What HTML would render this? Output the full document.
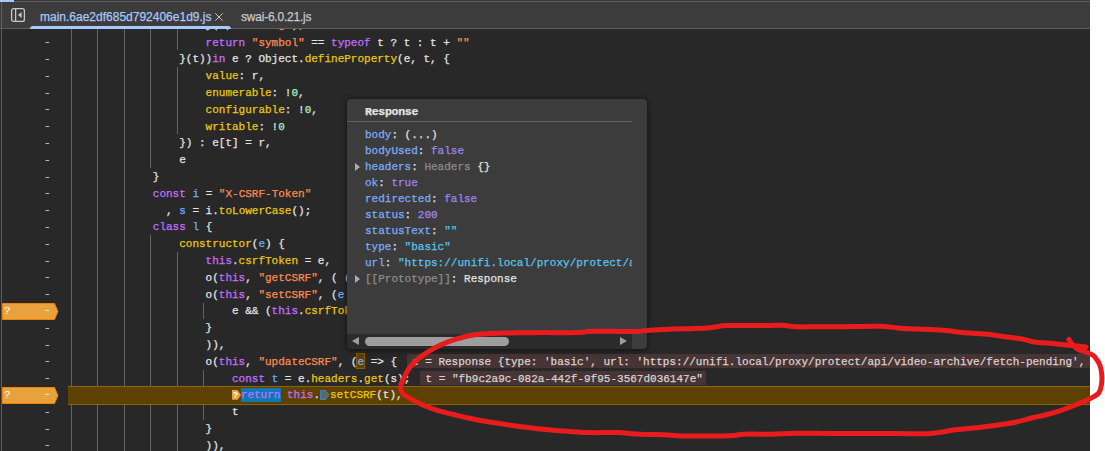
<!DOCTYPE html>
<html lang="en"><head><meta charset="utf-8"><title>Sources</title>
<style>
html,body{margin:0;padding:0;background:#fff;}
body{width:1105px;height:451px;overflow:hidden;position:relative;-webkit-text-stroke:0.25px;font-family:"Liberation Mono","DejaVu Sans Mono",monospace;}
#pane{position:absolute;left:0;top:0;width:1090px;height:451px;background:#282828;overflow:hidden;}
#tabbar{position:absolute;left:0;top:0;width:1090px;height:28px;background:#3c3c3c;z-index:5;}
#tabbar .topline{position:absolute;left:0;top:0;width:1090px;height:1px;background:#3a3a3a;}
#tabbar .topline2{position:absolute;left:0;top:1px;width:1090px;height:1px;background:#5e5e5e;}
#tabbar .bluestrip{position:absolute;left:0;top:0;width:14px;height:2px;background:#a8c7fa;}
#tabbar .botline{position:absolute;left:0;top:28px;width:1090px;height:1px;background:#5e5e5e;}
#tabbar .underline{position:absolute;left:30px;top:26px;width:201px;height:3px;background:#a8c7fa;border-radius:3px 3px 0 0;}
.tab{position:absolute;top:9px;height:16px;line-height:16px;font-family:"Liberation Sans","DejaVu Sans",sans-serif;font-size:12px;white-space:nowrap;}
#leftborder{position:absolute;left:1px;top:2px;width:1px;height:449px;background:#5e5e5e;z-index:6;}
.ln{position:absolute;left:0;height:17px;line-height:17px;font-size:11px;color:#e3e3e3;white-space:pre;}
.dash{position:absolute;left:44px;width:7px;height:17px;line-height:17px;font-size:11px;color:#a8c7fa;}
.g{position:absolute;width:1px;background:#636363;}
.k{color:#c56eff}.s{color:#ff8b50}.p{color:#ebc714}.d{color:#6caeff}.n{color:#a2f0cc}
.ebox{outline:1px solid #8a5c00;background:#5c4100;outline-offset:0px;padding-top:2px;}
.bp{position:absolute;left:2px;width:57px;height:17px;}
.wv{position:absolute;height:14px;line-height:16px;overflow:hidden;background:#473535;color:#d9d2d2;font-size:11px;white-space:pre;}
#pop{position:absolute;left:347px;top:99px;width:300px;height:249.6px;background:#3c3c3c;border-radius:4px;box-shadow:0 0 3px 1px rgba(0,0,0,.25), 0 2px 6px rgba(0,0,0,.35);z-index:4;overflow:hidden;}
#pop .title{position:absolute;left:18px;top:4.6px;height:16px;line-height:16px;font-size:11.6px;letter-spacing:-0.32px;font-weight:bold;color:#e3e3e3;}
#pop .hr{position:absolute;left:0;top:22px;width:285px;height:1px;background:#5e5e5e;}
#pop .row{position:absolute;left:18px;height:16px;line-height:16px;font-size:11px;color:#e3e3e3;white-space:pre;width:267px;overflow:hidden;}
#pop .tri{position:absolute;left:8px;width:0;height:0;border-left:5px solid #adadad;border-top:4px solid transparent;border-bottom:4px solid transparent;}
.pn{color:#7cacf8}.pv{color:#9f86ec}.ps{color:#5bc4ee}.pg{color:#8c8c8c}
</style></head><body>
<div id="pane">

<div class="g" style="left:71px;top:17px;height:437px"></div>
<div class="g" style="left:97px;top:17px;height:437px"></div>
<div class="g" style="left:124px;top:17px;height:437px"></div>
<div class="g" style="left:150px;top:17px;height:151px"></div>
<div class="g" style="left:150px;top:235px;height:219px"></div>
<div class="g" style="left:177px;top:17px;height:33px"></div>
<div class="g" style="left:177px;top:67px;height:67px"></div>
<div class="g" style="left:177px;top:252px;height:202px"></div>
<div class="g" style="left:203px;top:303px;height:16px"></div>
<div class="g" style="left:203px;top:370px;height:50px"></div>
<div style="position:absolute;left:68px;top:386px;width:1022px;height:17px;background:#5c4100;border-top:1px solid #8f6400;border-bottom:1px solid #8f6400;"></div>
<svg class="bp" style="top:303px" viewBox="0 0 57 17" width="57" height="17"><path d="M0.5 0.5 H52.5 L55.9 8.5 L52.5 16.5 H0.5 Z" fill="#e9a23b" stroke="#ee8100" stroke-width="1"/><text x="1.9" y="10.6" font-family="Liberation Mono, monospace" font-size="11" fill="#fff">?</text></svg>
<svg class="bp" style="top:387px" viewBox="0 0 57 17" width="57" height="17"><path d="M0.5 0.5 H52.5 L55.9 8.5 L52.5 16.5 H0.5 Z" fill="#e9a23b" stroke="#ee8100" stroke-width="1"/><text x="1.9" y="10.6" font-family="Liberation Mono, monospace" font-size="11" fill="#fff">?</text></svg>
<div class="dash" style="top:17.40px;color:#a8c7fa">-</div>
<div class="dash" style="top:34.20px;color:#a8c7fa">-</div>
<div class="dash" style="top:51.00px;color:#a8c7fa">-</div>
<div class="dash" style="top:67.80px;color:#a8c7fa">-</div>
<div class="dash" style="top:84.60px;color:#a8c7fa">-</div>
<div class="dash" style="top:101.40px;color:#a8c7fa">-</div>
<div class="dash" style="top:118.20px;color:#a8c7fa">-</div>
<div class="dash" style="top:135.00px;color:#a8c7fa">-</div>
<div class="dash" style="top:151.80px;color:#a8c7fa">-</div>
<div class="dash" style="top:168.60px;color:#a8c7fa">-</div>
<div class="dash" style="top:185.40px;color:#a8c7fa">-</div>
<div class="dash" style="top:202.20px;color:#a8c7fa">-</div>
<div class="dash" style="top:219.00px;color:#a8c7fa">-</div>
<div class="dash" style="top:235.80px;color:#a8c7fa">-</div>
<div class="dash" style="top:252.60px;color:#a8c7fa">-</div>
<div class="dash" style="top:269.40px;color:#a8c7fa">-</div>
<div class="dash" style="top:286.20px;color:#a8c7fa">-</div>
<div class="dash" style="top:302.00px;color:#fff">-</div>
<div class="dash" style="top:319.80px;color:#a8c7fa">-</div>
<div class="dash" style="top:336.60px;color:#a8c7fa">-</div>
<div class="dash" style="top:353.40px;color:#a8c7fa">-</div>
<div class="dash" style="top:370.20px;color:#a8c7fa">-</div>
<div class="dash" style="top:386.00px;color:#fff">-</div>
<div class="dash" style="top:403.80px;color:#a8c7fa">-</div>
<div class="dash" style="top:420.60px;color:#a8c7fa">-</div>
<div class="dash" style="top:437.40px;color:#a8c7fa">-</div>
<div class="ln" style="left:205.6px;top:16.80px">}(t, <span class="s">"string"</span>);</div>
<div class="ln" style="left:205.6px;top:34.60px"><span class="k">return</span> <span class="s">"symbol"</span> == <span class="k">typeof</span> t ? t : t + <span class="s">""</span></div>
<div class="ln" style="left:179.2px;top:51.40px">}(t))<span class="k">in</span> e ? Object.<span class="p">defineProperty</span>(e, t, {</div>
<div class="ln" style="left:205.6px;top:68.20px"><span class="p">value</span>: r,</div>
<div class="ln" style="left:205.6px;top:85.00px"><span class="p">enumerable</span>: !<span class="n">0</span>,</div>
<div class="ln" style="left:205.6px;top:101.80px"><span class="p">configurable</span>: !<span class="n">0</span>,</div>
<div class="ln" style="left:205.6px;top:118.60px"><span class="p">writable</span>: !<span class="n">0</span></div>
<div class="ln" style="left:179.2px;top:135.40px">}) : e[t] = r,</div>
<div class="ln" style="left:179.2px;top:152.20px">e</div>
<div class="ln" style="left:152.8px;top:169.00px">}</div>
<div class="ln" style="left:152.8px;top:185.80px"><span class="k">const</span> <span class="d">i</span> = <span class="s">"X-CSRF-Token"</span></div>
<div class="ln" style="left:166.0px;top:202.60px">, <span class="d">s</span> = i.<span class="p">toLowerCase</span>();</div>
<div class="ln" style="left:152.8px;top:219.40px"><span class="k">class</span> <span class="d">l</span> {</div>
<div class="ln" style="left:179.2px;top:236.20px"><span class="p">constructor</span>(<span class="d">e</span>) {</div>
<div class="ln" style="left:205.6px;top:253.00px"><span class="k">this</span>.<span class="p">csrfToken</span> = e,</div>
<div class="ln" style="left:205.6px;top:269.80px">o(<span class="k">this</span>, <span class="s">"getCSRF"</span>, ( () =&gt; <span class="k">this</span>.<span class="p">csrfToken</span>)),</div>
<div class="ln" style="left:205.6px;top:286.60px">o(<span class="k">this</span>, <span class="s">"setCSRF"</span>, (<span class="d">e</span> =&gt; {</div>
<div class="ln" style="left:232.0px;top:303.40px">e &amp;&amp; (<span class="k">this</span>.<span class="p">csrfToken</span> = e)</div>
<div class="ln" style="left:205.6px;top:320.20px">}</div>
<div class="ln" style="left:205.6px;top:337.00px">)),</div>
<div class="ln" style="left:205.6px;top:353.80px">o(<span class="k">this</span>, <span class="s">"updateCSRF"</span>, (<span class="d ebox">e</span> =&gt; {</div>
<div class="ln" style="left:232.0px;top:370.60px"><span class="k">const</span> <span class="d">t</span> = e.<span class="p">headers</span>.<span class="p">get</span>(s);</div>
<svg style="position:absolute;left:231.6px;top:390.2px" width="9" height="9.8" viewBox="0 0 9 9" preserveAspectRatio="none"><path d="M0 0 H5.6 L9 4.5 L5.6 9 H0 Z" fill="#e9a23b"/><text x="1" y="7.6" font-family="Liberation Mono, monospace" font-size="8.5" font-weight="bold" fill="#fff">?</text></svg>
<div style="position:absolute;left:240.8px;top:388px;width:40px;height:14px;background:#0f78b6"></div>
<div class="ln" style="left:240.8px;top:386.80px"><span class="k">return</span> <span class="k">this</span>.</div>
<svg style="position:absolute;left:319.8px;top:389.7px" width="10" height="10" viewBox="0 0 10 10"><path d="M0.6 0.6 H5.4 L8.8 5 L5.4 9.4 H0.6 Z" fill="#6b634f" stroke="#2f82c9" stroke-width="1.1"/></svg>
<div class="ln" style="left:330.0px;top:386.80px"><span class="p">setCSRF</span>(t),</div>
<div class="ln" style="left:232.0px;top:404.20px">t</div>
<div class="ln" style="left:205.6px;top:421.00px">}</div>
<div class="ln" style="left:205.6px;top:437.80px">)),</div>
<div class="wv" style="left:407px;top:354px;width:683px;padding-left:5px;box-sizing:border-box">e = Response {type: 'basic', url: 'https://unifi.local/proxy/protect/api/video-archive/fetch-pending',</div>
<div class="wv" style="left:420px;top:371px;width:286px;padding-left:5.6px;box-sizing:border-box">t = "fb9c2a9c-082a-442f-9f95-3567d036147e"</div>
<div id="pop"><div class="title">Response</div><div class="hr"></div>
<div class="row" style="top:28px"><span class="pn">body</span>: (...)</div>
<div class="row" style="top:44px"><span class="pn">bodyUsed</span>: <span class="pv">false</span></div>
<div class="tri" style="top:64px"></div>
<div class="row" style="top:60px"><span class="pn">headers</span>: <span class="pg">Headers</span> {}</div>
<div class="row" style="top:76px"><span class="pn">ok</span>: <span class="pv">true</span></div>
<div class="row" style="top:92px"><span class="pn">redirected</span>: <span class="pv">false</span></div>
<div class="row" style="top:108px"><span class="pn">status</span>: <span class="pv">200</span></div>
<div class="row" style="top:124px"><span class="pn">statusText</span>: <span class="ps">""</span></div>
<div class="row" style="top:140px"><span class="pn">type</span>: <span class="ps">"basic"</span></div>
<div class="row" style="top:156px"><span class="pn">url</span>: <span class="ps">"https://unifi.local/proxy/protect/api/video-archive/fetch-pending"</span></div>
<div class="tri" style="top:176px"></div>
<div class="row" style="top:172px"><span class="pg">[[Prototype]]</span>: Response</div>
<div style="position:absolute;left:0;top:235px;width:285px;height:16px;background:#2b2b2b"></div>
<div style="position:absolute;left:18px;top:238px;width:144px;height:9px;background:#9e9e9e;border-radius:4.5px"></div>
<div style="position:absolute;left:4.5px;top:238px;width:0;height:0;border-right:7.5px solid #9e9e9e;border-top:4.6px solid transparent;border-bottom:4.6px solid transparent"></div>
<div style="position:absolute;left:273px;top:238px;width:0;height:0;border-left:7.5px solid #9e9e9e;border-top:4.6px solid transparent;border-bottom:4.6px solid transparent"></div>
</div>
<div id="tabbar"><div class="topline"></div><div class="topline2"></div><div class="bluestrip"></div><div class="botline"></div><div class="underline"></div>
<svg style="position:absolute;left:10px;top:7px" width="16" height="16" viewBox="0 0 16 16"><rect x="1.6" y="1.6" width="12.8" height="12.8" rx="2" ry="2" fill="none" stroke="#c7c7c7" stroke-width="1.3"/><path d="M5.6 1.6 V14.4" stroke="#c7c7c7" stroke-width="1.3"/><path d="M11.6 5 L8 8 L11.6 11 Z" fill="#c7c7c7"/></svg>
<div class="tab" id="tab1" style="left:40px;color:#a8c7fa">main.6ae2df685d792406e1d9.js</div>
<svg style="position:absolute;left:215px;top:13px" width="8" height="8" viewBox="0 0 8 8"><path d="M0.3 0.3 L7.7 7.7 M7.7 0.3 L0.3 7.7" stroke="#c7c7c7" stroke-width="1"/></svg>
<div class="tab" id="tab2" style="left:241px;color:#c7c7c7;letter-spacing:-0.22px">swai-6.0.21.js</div>
</div>
<div id="leftborder"></div>
</div>
<svg style="position:absolute;left:0;top:0;z-index:10" width="1105" height="451" viewBox="0 0 1105 451"><path d="M1068.9 339.4 C1069.4 340.2 1070.8 342.6 1072.0 344.0 C1073.2 345.4 1074.6 347.0 1075.9 348.0 C1077.2 349.0 1078.3 349.5 1080.0 350.2 C1081.7 350.9 1084.1 351.3 1085.9 352.0 C1087.7 352.7 1089.5 353.5 1091.0 354.3 C1092.5 355.1 1093.3 355.1 1094.8 356.9 C1096.3 358.7 1098.6 361.9 1099.8 364.9 C1101.0 367.9 1101.5 371.6 1101.8 374.9 C1102.1 378.2 1101.9 381.9 1101.4 384.9 C1100.9 387.9 1100.7 390.5 1098.8 392.8 C1096.9 395.1 1093.6 396.8 1089.8 398.8 C1086.0 400.8 1080.9 402.8 1075.9 404.8 C1070.9 406.8 1065.1 409.1 1059.9 410.8 C1054.8 412.5 1049.5 413.8 1045.0 415.0 C1040.5 416.2 1038.4 416.4 1032.6 417.8 C1026.8 419.2 1019.3 421.6 1009.9 423.3 C1000.5 425.0 985.4 426.7 976.0 427.8 C966.6 428.9 960.9 429.2 953.4 430.1 C945.9 431.1 940.1 432.9 930.7 433.5 C921.3 434.1 908.1 433.5 896.8 433.5 C885.5 433.5 874.2 433.5 862.9 433.5 C851.6 433.5 840.3 433.4 829.0 433.4 C817.7 433.4 804.6 433.2 795.0 433.3 C785.4 433.4 779.7 434.1 771.2 434.2 C762.7 434.3 750.9 433.9 744.1 434.2 C737.3 434.5 737.3 435.5 730.5 435.8 C723.7 436.1 711.7 436.0 703.4 436.0 C695.1 436.0 686.7 436.2 680.7 436.0 C674.7 435.8 674.0 435.2 667.2 434.9 C660.4 434.6 648.3 434.6 640.0 434.2 C631.7 433.8 625.7 432.9 617.4 432.6 C609.1 432.3 598.5 432.8 590.2 432.6 C581.9 432.4 575.1 431.8 567.6 431.3 C560.1 430.8 550.0 430.0 545.0 429.6 C540.0 429.2 541.0 429.1 537.5 428.7 C534.0 428.3 528.5 427.7 524.0 427.1 C519.5 426.5 514.9 426.0 510.4 425.3 C505.9 424.6 501.3 423.7 496.8 423.0 C492.3 422.3 487.7 421.8 483.2 421.0 C478.7 420.2 474.2 419.3 469.7 418.3 C465.2 417.3 460.4 416.1 456.1 415.1 C451.8 414.1 447.8 413.2 443.9 412.1 C440.0 411.1 436.6 410.0 433.0 408.8 C429.4 407.6 425.5 406.2 422.1 404.7 C418.7 403.2 415.5 401.5 412.6 399.9 C409.7 398.3 406.4 396.8 404.5 395.2 C402.6 393.6 401.7 392.1 401.1 390.4 C400.5 388.7 400.4 387.4 401.1 384.9 C401.8 382.4 403.6 378.3 405.2 375.2 C406.8 372.1 408.5 369.1 410.6 366.4 C412.8 363.7 415.3 361.3 418.1 358.9 C420.9 356.5 424.2 354.2 427.6 352.1 C431.0 350.0 434.8 347.8 438.4 346.0 C442.0 344.2 445.2 342.8 449.3 341.3 C453.4 339.8 458.4 338.3 462.9 337.2 C467.4 336.1 471.9 335.1 476.4 334.5 C480.9 333.9 485.5 333.6 490.0 333.4 C494.5 333.2 499.1 333.2 503.6 333.1 C508.1 333.0 512.7 332.8 517.2 332.7 C521.7 332.6 526.1 332.7 530.7 332.7 C535.3 332.7 537.0 332.7 545.0 332.6 C553.0 332.6 571.5 332.8 579.0 332.6 C586.5 332.4 584.6 331.5 590.2 331.3 C595.9 331.1 605.4 331.3 612.9 331.3 C620.4 331.3 628.7 331.7 635.5 331.5 C642.3 331.3 647.2 330.3 653.6 329.9 C660.0 329.5 667.2 329.2 674.0 329.0 C680.8 328.8 687.9 328.9 694.3 328.6 C700.7 328.3 707.1 327.9 712.4 327.4 C717.7 326.9 720.0 325.9 726.0 325.6 C732.0 325.3 741.1 325.6 748.6 325.6 C756.1 325.6 765.2 325.4 771.2 325.4 C777.2 325.4 780.8 325.2 784.8 325.4 C788.8 325.6 789.6 326.6 795.0 326.8 C800.4 327.0 809.5 326.8 817.0 326.8 C824.5 326.8 829.5 326.9 840.2 326.8 C850.9 326.7 870.4 326.0 881.0 326.3 C891.6 326.6 896.1 328.1 903.6 328.6 C911.1 329.1 918.7 328.9 926.2 329.3 C933.7 329.7 942.8 330.2 948.8 330.8 C954.8 331.4 956.4 332.1 962.4 332.6 C968.4 333.1 978.2 333.4 985.0 334.0 C991.8 334.6 996.7 335.6 1003.1 336.5 C1009.5 337.4 1018.6 338.3 1023.5 339.2 C1028.4 340.1 1029.0 341.1 1032.6 341.7 C1036.2 342.3 1042.0 342.7 1045.0 343.0 C1048.0 343.3 1046.4 342.9 1050.4 343.3 C1054.4 343.7 1063.1 344.6 1069.0 345.2 C1074.9 345.8 1083.2 346.6 1086.0 346.9" fill="none" stroke="#e81c1c" stroke-width="5" stroke-linecap="round" stroke-linejoin="round"/></svg>
</body></html>
